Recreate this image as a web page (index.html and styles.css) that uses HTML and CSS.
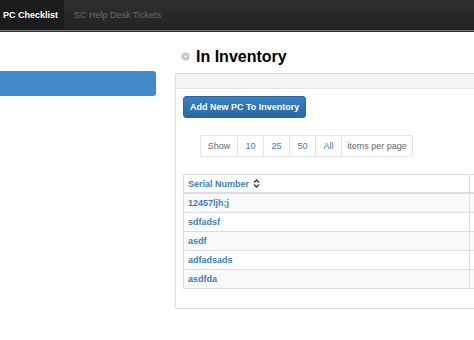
FILE: index.html
```html
<!DOCTYPE html>
<html lang="en">
<head>
  <meta charset="UTF-8">
  <title>PC Checklist</title>
  <link rel="stylesheet" href="styles.css">
</head>
<body>
  <div class="navbar">
    <a class="nav-item active" href="#">PC Checklist</a>
    <a class="nav-item" href="#">SC Help Desk Tickets</a>
  </div>

  <div class="page">
    <div class="sidebar">
      <div class="side-active"></div>
    </div>

    <div class="main">
      <h1><span class="collapse-dot"></span>In Inventory</h1>

      <div class="panel">
        <div class="panel-heading"></div>
        <div class="panel-body">
          <button class="btn-primary">Add New PC To Inventory</button>

          <div class="page-size">
            <span class="label show">Show</span>
            <a href="#">10</a>
            <a href="#">25</a>
            <a href="#">50</a>
            <a href="#">All</a>
            <span class="label per-page">items per page</span>
          </div>

          <table class="grid">
            <thead>
              <tr>
                <th class="col-serial">Serial Number
                  <svg class="sort" width="7" height="9" viewBox="0 0 7 9">
                    <path d="M1 3.5 L3.5 1 L6 3.5 M1 5.5 L3.5 8 L6 5.5" fill="none" stroke="#333" stroke-width="1.3"/>
                  </svg>
                </th>
                <th>E</th>
              </tr>
            </thead>
            <tbody>
              <tr><td><a href="#">12457ljh;j</a></td><td>-</td></tr>
              <tr><td><a href="#">sdfadsf</a></td><td>a</td></tr>
              <tr><td><a href="#">asdf</a></td><td>a</td></tr>
              <tr><td><a href="#">adfadsads</a></td><td></td></tr>
              <tr><td><a href="#">asdfda</a></td><td></td></tr>
            </tbody>
          </table>
        </div>
      </div>
    </div>
  </div>
</body>
</html>
```

FILE: styles.css
```css
html, body {
  overflow: hidden;
}

body {
  margin: 0;
  font-family: "Liberation Sans", Arial, sans-serif;
  color: #333;
  background: #fff;
}

.navbar {
  display: flex;
  height: 30px;
  background: linear-gradient(#2f2f2f, #222);
  border-bottom: 1px solid #777;
  box-shadow: 0 1px 0 #333;
}

.nav-item {
  display: flex;
  align-items: center;
  padding: 0 6px 0 3px;
  font-size: 9px;
  color: #6a6a6a;
  text-decoration: none;
}

.nav-item + .nav-item {
  padding-left: 10px;
}

.nav-item.active {
  color: #fff;
  font-weight: bold;
  background: #1c1c1c;
}

.page {
  display: flex;
  gap: 19px;
}

.sidebar {
  width: 156px;
  flex-shrink: 0;
  padding-top: 40px;
}

.side-active {
  height: 25px;
  background: #428bca;
  border-radius: 0 3px 3px 0;
}

.main {
  width: 340px;
  flex-shrink: 0;
}

h1 {
  display: flex;
  align-items: center;
  margin: 17px 0 8px 6px;
  font-size: 16px;
  font-weight: bold;
  color: #000;
  line-height: 17px;
}

.collapse-dot {
  width: 7px;
  height: 7px;
  border-radius: 50%;
  background: #c8c8c8;
  border: 1px solid #d8d8d8;
  margin-right: 6px;
  position: relative;
}

.collapse-dot::after {
  content: "";
  position: absolute;
  left: 2px;
  top: 3px;
  width: 3px;
  height: 1px;
  background: #fff;
}

.panel {
  border: 1px solid #ddd;
  border-radius: 2px;
  box-shadow: 0 1px 2px rgba(0, 0, 0, 0.08);
}

.panel-heading {
  height: 14px;
  background: #f5f5f5;
  border-bottom: 1px solid #e3e3e3;
}

.panel-body {
  padding: 7px 0 19px 7px;
}

.btn-primary {
  display: block;
  height: 22px;
  padding: 0 6px;
  font-family: "Liberation Sans", Arial, sans-serif;
  font-size: 9px;
  font-weight: bold;
  color: #fff;
  background: linear-gradient(#3780bf, #2b6aa1);
  border: 1px solid #2a65a0;
  border-radius: 3px;
}

.page-size {
  display: inline-flex;
  margin: 17px 0 17px 17px;
  border: 1px solid #e3e3e3;
  border-radius: 2px;
  height: 20px;
  font-size: 9px;
}

.page-size > * {
  display: flex;
  align-items: center;
  justify-content: center;
  border-left: 1px solid #e3e3e3;
  text-decoration: none;
}

.page-size > *:first-child {
  border-left: none;
}

.page-size a {
  width: 25px;
  color: #3a80be;
}

.page-size .label {
  color: #666;
}

.page-size .show {
  width: 36px;
}

.page-size .per-page {
  width: 70px;
}

.grid {
  border-collapse: collapse;
  width: 330px;
  font-size: 9px;
  border: 1px solid #ddd;
}

.grid th,
.grid td {
  height: 18px;
  padding: 0 4px;
  text-align: left;
  border-bottom: 1px solid #ddd;
  white-space: nowrap;
}

.grid th {
  height: 17px;
  color: #3a80be;
  border-bottom: 2px solid #ddd;
}

.grid .col-serial {
  width: 277px;
  border-right: 1px solid #ddd;
}

.grid td:first-child {
  border-right: 1px solid #ddd;
}

.grid th:last-child {
  color: #a9c8e4;
}

.grid td:last-child {
  color: #b39b7a;
}

.grid tbody tr:nth-child(odd) {
  background: #f9f9f9;
}

.grid td a {
  color: #3a80be;
  font-weight: bold;
  text-decoration: none;
}

.sort {
  vertical-align: -1px;
  margin-left: 1px;
}
```
